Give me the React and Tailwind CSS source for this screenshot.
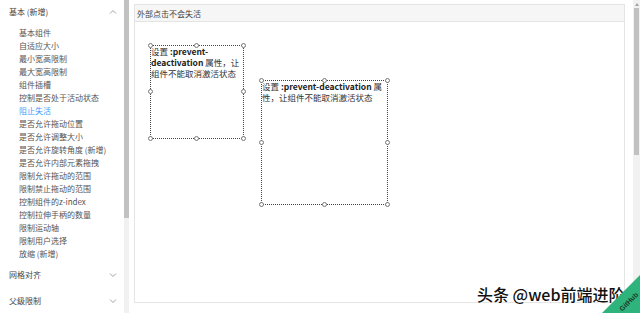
import React from "react";

const items = [
  "基本组件",
  "自适应大小",
  "最小宽高限制",
  "最大宽高限制",
  "组件插槽",
  "控制是否处于活动状态",
  "阻止失活",
  "是否允许拖动位置",
  "是否允许调整大小",
  "是否允许旋转角度 (新增)",
  "是否允许内部元素拖拽",
  "限制允许拖动的范围",
  "限制禁止拖动的范围",
  "控制组件的z-index",
  "控制拉伸手柄的数量",
  "限制运动轴",
  "限制用户选择",
  "放缩 (新增)",
];

const Chevron = ({ up }) => (
  <svg width="8" height="6" viewBox="0 0 8 6" className="text-[#999]">
    <path d={up ? "M1 4.5 L4 1.5 L7 4.5" : "M1 1.5 L4 4.5 L7 1.5"} fill="none" stroke="currentColor" strokeWidth="0.9" />
  </svg>
);

const Handle = ({ cls }) => (
  <span className={`absolute w-[5px] h-[5px] rounded-full bg-white border border-[#777] ${cls}`} />
);

const Box = ({ cls, children }) => (
  <div className={`absolute border border-dotted border-[#444] ${cls}`}>
    <div className="text-[8.5px] leading-[11px] text-[#333]">{children}</div>
    <Handle cls="-left-[3px] -top-[3px]" />
    <Handle cls="left-1/2 -ml-[3px] -top-[3px]" />
    <Handle cls="-right-[3px] -top-[3px]" />
    <Handle cls="-left-[3px] top-1/2 -mt-[3px]" />
    <Handle cls="-right-[3px] top-1/2 -mt-[3px]" />
    <Handle cls="-left-[3px] -bottom-[3px]" />
    <Handle cls="left-1/2 -ml-[3px] -bottom-[3px]" />
    <Handle cls="-right-[3px] -bottom-[3px]" />
  </div>
);

const Text = () => (
  <>
    设置 <b className="font-bold text-[#222]">:prevent-deactivation</b> 属性，让组件不能取消激活状态
  </>
);

export default function App() {
  return (
    <div
      className="relative w-[640px] h-[313px] overflow-hidden bg-white flex"
      style={{ fontFamily: '"Noto Sans CJK SC", "Liberation Sans", sans-serif' }}
    >
      {/* Sidebar */}
      <aside className="w-[124px] shrink-0 text-[8px] text-[#555]">
        <div className="flex items-center justify-between pl-[9px] pr-[7px] h-[24px] text-[#444]">
          <span>基本 (新增)</span>
          <Chevron up />
        </div>
        <ul className="pl-[19px] pt-[2px]">
          {items.map((t) => (
            <li key={t} className={`h-[13px] leading-[13px] ${t === "阻止失活" ? "text-[#409eff]" : ""}`}>
              {t}
            </li>
          ))}
        </ul>
        <div className="flex items-center justify-between pl-[9px] pr-[7px] h-[26px] mt-[2px] text-[#444]">
          <span>网格对齐</span>
          <Chevron />
        </div>
        <div className="flex items-center justify-between pl-[9px] pr-[7px] h-[26px] text-[#444]">
          <span>父级限制</span>
          <Chevron />
        </div>
      </aside>

      {/* Sidebar scrollbar */}
      <div className="w-[5px] shrink-0 bg-[#f1f1f1] flex flex-col">
        <div className="h-[218px] bg-[#c1c1c1]" />
      </div>

      {/* Main */}
      <main className="flex-1 pl-[5px] pr-[8px] pt-[4px] pb-[10px]">
        <div className="h-full border border-[#e4e4e4] flex flex-col">
          <div className="h-[17px] bg-[#f6f6f6] border-b border-[#e4e4e4] text-[8px] text-[#444] leading-[17px] pl-[2px]">
            外部点击不会失活
          </div>
          <div className="relative flex-1">
            <Box cls="left-[15px] top-[23px] w-[94px] h-[94px]">
              <Text />
            </Box>
            <Box cls="left-[126px] top-[58px] w-[127px] h-[125px]">
              <Text />
            </Box>
          </div>
        </div>
      </main>

      {/* Right scrollbar */}
      <div className="w-[7px] shrink-0 bg-[#f1f1f1] flex flex-col">
        <div className="h-[8px] flex items-center justify-center">
          <span className="w-0 h-0 border-l-[2px] border-r-[2px] border-b-[3px] border-l-transparent border-r-transparent border-b-[#a3a3a3]" />
        </div>
        <div className="h-[147px] mx-[1px] bg-[#c1c1c1]" />
      </div>

      {/* Watermark */}
      <div className="absolute left-[477px] top-[283px] text-[16px] leading-[22px] font-medium text-[#111] [text-shadow:0_0_2px_#fff,0_0_2px_#fff,0_0_2px_#fff]">
        头条 @web前端进阶
      </div>

      {/* GitHub corner */}
      <svg className="absolute right-0 bottom-0" width="38" height="38" viewBox="0 0 38 38">
        <polygon points="38,0 38,38 0,38" fill="#2fb37d" />
        <text x="27" y="29" fontSize="7" fontWeight="bold" fill="#1a3a2a" transform="rotate(-45 27 27)" textAnchor="middle" fontFamily="Liberation Sans, sans-serif">
          GitHub
        </text>
      </svg>
    </div>
  );
}
